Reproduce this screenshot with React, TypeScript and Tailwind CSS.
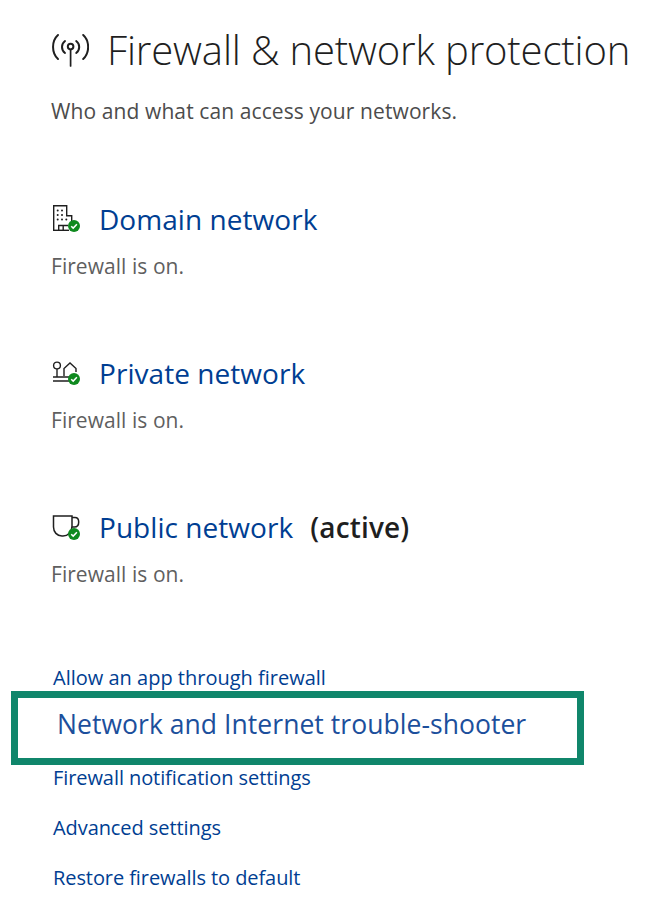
import React from 'react';

const font = "font-['Open_Sans','Noto_Sans',sans-serif]";

function CheckBadge({ className }: { className: string }) {
  return (
    <svg viewBox="0 0 12 12" className={`absolute left-[16px] h-[12px] w-[12px] ${className}`}>
      <circle cx="6" cy="6" r="6" fill="#0f8a1f" />
      <path d="M3.2 6.2 5.2 8.1 8.9 4.2" fill="none" stroke="#fff" strokeWidth="1.5" />
    </svg>
  );
}

function BuildingIcon() {
  return (
    <svg viewBox="0 0 28 28" className="h-[28px] w-[28px]" fill="none" stroke="#1f1f1f" strokeWidth="1.4">
      <path d="M1.7 25.3V0.7H14.7V10.7H19.7V20" />
      <path d="M1 25.3H17" />
      <path d="M6.7 25V20.5H16M11.2 20.5V25" />
      <g fill="#1f1f1f" stroke="none">
        <circle cx="5.7" cy="5.5" r="1" /><circle cx="10" cy="5.5" r="1" />
        <circle cx="5.7" cy="10" r="1" /><circle cx="10" cy="10" r="1" />
        <circle cx="5.7" cy="14.5" r="1" /><circle cx="10" cy="14.5" r="1" /><circle cx="14.3" cy="14.5" r="1" />
      </g>
    </svg>
  );
}

function HomeIcon() {
  return (
    <svg viewBox="0 0 28 28" className="h-[28px] w-[28px]" fill="none" stroke="#1f1f1f" strokeWidth="1.4">
      <circle cx="5" cy="6.5" r="3.4" />
      <path d="M5 10V18" />
      <path d="M12 17V9.5L18 4L24 9.5V13" />
      <path d="M1 18H17M1 22H17" strokeWidth="1.6" />
    </svg>
  );
}

function CupIcon() {
  return (
    <svg viewBox="0 0 28 28" className="h-[28px] w-[28px]" fill="none" stroke="#1f1f1f" strokeWidth="1.5">
      <path d="M1.5 3H20V13C20 19 16 23 11 23H10C5 23 1.5 19 1.5 14Z" />
      <path d="M20 4.5H23C25.5 4.5 26.7 6.5 26.7 9C26.7 12 25 14 22.5 14H20" />
    </svg>
  );
}

function AntennaIcon() {
  return (
    <svg viewBox="0 0 38 36" className="h-[36px] w-[38px]" fill="none" stroke="#1f1f1f" strokeWidth="2" strokeLinecap="round">
      <circle cx="19.6" cy="14.6" r="2.8" />
      <path d="M19.6 17.5V34" strokeWidth="1.7" />
      <path d="M14 9C10 12 10 18 14 21" />
      <path d="M25.2 9C29.2 12 29.2 18 25.2 21" />
      <path d="M7 3C0.4 9 0.4 21 7 27" />
      <path d="M32.2 3C38.8 9 38.8 21 32.2 27" />
    </svg>
  );
}

function NetworkSection({ icon, name, badge, active }: { icon: React.ReactNode; name: string; badge: string; active?: boolean }) {
  return (
    <section className="h-[154px]">
      <div className="flex h-[36px] items-center">
        <div className="relative ml-[1px] h-[28px] w-[47px]">
          {icon}
          <CheckBadge className={badge} />
        </div>
        <h2 className="text-[28px] leading-[36px] tracking-[0.05px] text-[#003e92]">{name}</h2>
        {active && <span className="ml-[17px] text-[28px] font-semibold leading-[36px] tracking-[0.15px] text-[#1f1f1f]">(active)</span>}
      </div>
      <p className="mt-[16px] text-[21px] leading-[26px] tracking-[0.05px] text-[#5f5f5f]">Firewall is on.</p>
    </section>
  );
}

const links = ['Firewall notification settings', 'Advanced settings', 'Restore firewalls to default'];

export default function App() {
  return (
    <div className={`${font} h-[907px] w-[658px] overflow-hidden bg-white`}>
      <header className="flex items-center pl-[51px] pt-[27px]">
        <AntennaIcon />
        <h1 className="ml-[18px] whitespace-nowrap text-[40px] font-light leading-[46px] tracking-[-0.15px] text-[#1f1f1f]">
          Firewall &amp; network protection
        </h1>
      </header>
      <p className="ml-[51px] mt-[24px] text-[21px] leading-[28px] tracking-[0.1px] text-[#4c4c4c]">
        Who and what can access your networks.
      </p>

      <div className="ml-[51px] mt-[76px]">
        <NetworkSection icon={<BuildingIcon />} name="Domain network" badge="top-[15px]" />
        <NetworkSection icon={<HomeIcon />} name="Private network" badge="top-[14px]" />
        <NetworkSection icon={<CupIcon />} name="Public network" badge="top-[15px]" active />
      </div>

      <nav className="mt-[1px] flex flex-col">
        <a className="ml-[53px] text-[20px] leading-[28px] text-[#003e92]">Allow an app through firewall</a>
        <div className="ml-[11px] mt-[-1px] flex h-[74px] w-[573px] items-center border-[7px] border-[#10866b] pb-[8px] pl-[39px]">
          <a className="whitespace-nowrap text-[26.5px] leading-[32px] tracking-[0.05px] text-[#1c4f9c]">
            Network and Internet trouble-shooter
          </a>
        </div>
        <div className="ml-[53px] mt-[-1px] flex flex-col gap-[22px]">
          {links.map(link => (
            <a key={link} className="text-[20px] leading-[28px] tracking-[-0.08px] text-[#003e92]">{link}</a>
          ))}
        </div>
      </nav>
    </div>
  );
}
